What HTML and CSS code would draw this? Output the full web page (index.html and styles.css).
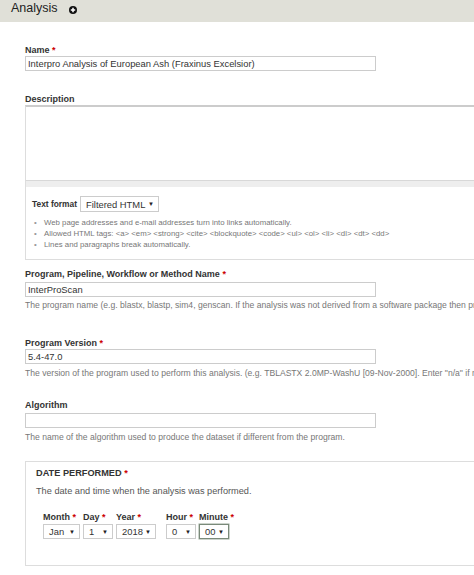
FILE: index.html
```html
<!DOCTYPE html>
<html>
<head>
<meta charset="utf-8">
<link rel="stylesheet" href="styles.css">
</head>
<body>
<div class="header">
  <span class="title">Analysis</span>
  <span class="add-icon"><svg width="8" height="8" viewBox="0 0 8 8"><circle cx="4" cy="4" r="4" fill="#111"/><path d="M4 1.8V6.2M1.8 4H6.2" stroke="#fff" stroke-width="1.5"/></svg></span>
</div>
<div class="form">
  <div class="item item-name">
    <label class="lbl">Name <span class="req">*</span></label>
    <div class="input">Interpro Analysis of European Ash (Fraxinus Excelsior)</div>
  </div>

  <div class="item item-desc">
    <label class="lbl">Description</label>
    <div class="textarea"></div>
    <div class="grip"></div>
    <div class="format">
      <div class="format-row">
        <span class="format-lbl">Text format</span>
        <span class="select fmt-select"><span>Filtered HTML</span><span class="arrow">▼</span></span>
      </div>
      <ul class="tips">
        <li>Web page addresses and e-mail addresses turn into links automatically.</li>
        <li>Allowed HTML tags: &lt;a&gt; &lt;em&gt; &lt;strong&gt; &lt;cite&gt; &lt;blockquote&gt; &lt;code&gt; &lt;ul&gt; &lt;ol&gt; &lt;li&gt; &lt;dl&gt; &lt;dt&gt; &lt;dd&gt;</li>
        <li>Lines and paragraphs break automatically.</li>
      </ul>
    </div>
  </div>

  <div class="item item-program">
    <label class="lbl">Program, Pipeline, Workflow or Method Name <span class="req">*</span></label>
    <div class="input in-gap">InterProScan</div>
    <div class="help">The program name (e.g. blastx, blastp, sim4, genscan. If the analysis was not derived from a software package then provide a very brief description of the pipeline, workflow or method.</div>
  </div>

  <div class="item item-version">
    <label class="lbl">Program Version <span class="req">*</span></label>
    <div class="input">5.4-47.0</div>
    <div class="help help-low">The version of the program used to perform this analysis. (e.g. TBLASTX 2.0MP-WashU [09-Nov-2000]. Enter "n/a" if no version is available or applicable.</div>
  </div>

  <div class="item item-algo">
    <label class="lbl">Algorithm</label>
    <div class="input in-gap"></div>
    <div class="help help-low">The name of the algorithm used to produce the dataset if different from the program.</div>
  </div>

  <div class="fieldset">
    <div class="legend">DATE PERFORMED <span class="req">*</span></div>
    <div class="fs-help">The date and time when the analysis was performed.</div>
    <div class="date-row">
      <div class="dpart">
        <div class="dlbl">Month <span class="req">*</span></div>
        <span class="select s-month"><span>Jan</span><span class="arrow">▼</span></span>
      </div>
      <div class="dpart">
        <div class="dlbl">Day <span class="req">*</span></div>
        <span class="select s-day"><span>1</span><span class="arrow">▼</span></span>
      </div>
      <div class="dpart">
        <div class="dlbl">Year <span class="req">*</span></div>
        <span class="select s-year"><span>2018</span><span class="arrow">▼</span></span>
      </div>
      <div class="dpart gap-left">
        <div class="dlbl">Hour <span class="req">*</span></div>
        <span class="select s-hour"><span>0</span><span class="arrow">▼</span></span>
      </div>
      <div class="dpart">
        <div class="dlbl">Minute <span class="req">*</span></div>
        <span class="select s-min focus"><span>00</span><span class="arrow">▼</span></span>
      </div>
    </div>
  </div>
</div>
</body>
</html>
```

FILE: styles.css
```css
html, body {
  margin: 0;
  padding: 0;
  background: #fff;
  overflow: hidden;
}
body {
  width: 474px;
  height: 575px;
  font-family: "Liberation Sans", Arial, sans-serif;
  color: #333;
}
.header {
  height: 22px;
  background: #e0e0d8;
  padding-left: 11px;
  display: flex;
  align-items: flex-start;
}
.title {
  font-size: 12.5px;
  line-height: 16px;
  color: #222;
}
.add-icon {
  margin-left: 11px;
  margin-top: 6px;
  width: 8px;
  height: 8px;
  display: block;
}
.add-icon svg { display: block; }

.form {
  padding-left: 25px;
  width: 449px;
  overflow: hidden;
}
.item { display: block; }
.lbl {
  display: block;
  font-size: 9px;
  line-height: 12px;
  font-weight: bold;
  color: #333;
}
.req { color: #c00; }
.input {
  box-sizing: border-box;
  width: 351px;
  height: 15px;
  border: 1px solid #ccc;
  font-size: 9.4px;
  line-height: 13px;
  padding-left: 2px;
  color: #333;
  white-space: nowrap;
  overflow: hidden;
}
.in-gap { margin-top: 2px; }
.help {
  font-size: 8.6px;
  line-height: 12px;
  color: #777;
  white-space: nowrap;
  margin-top: 2px;
}
.help-low { margin-top: 3px; }
.item-name { margin-top: 22px; }
.item-desc { margin-top: 22px; }
.textarea {
  box-sizing: border-box;
  width: 460px;
  height: 75px;
  border: 1px solid #ddd;
  border-top: 2px solid #ccc;
  border-bottom: 0;
}
.grip {
  box-sizing: border-box;
  width: 460px;
  height: 7px;
  background: #eee;
  border-top: 1px solid #d8d8d8;
  border-left: 1px solid #ddd;
}
.format {
  box-sizing: border-box;
  width: 460px;
  height: 73px;
  border: 1px solid #ddd;
  border-top: 0;
  padding: 9px 0 0 6px;
}
.format-row {
  display: flex;
  align-items: center;
  gap: 3px;
}
.format-lbl {
  font-size: 8.4px;
  font-weight: bold;
  color: #333;
}
.select {
  box-sizing: border-box;
  display: inline-flex;
  align-items: center;
  justify-content: space-between;
  height: 15px;
  border: 1px solid #ccc;
  background: #fff;
  font-size: 9.4px;
  color: #333;
  padding: 0 4px 0 5px;
}
.arrow {
  font-size: 6px;
  color: #222;
}
.fmt-select { width: 79px; height: 16px; }
.tips {
  margin: 5px 0 0 0;
  padding: 0 0 0 12px;
  list-style: none;
  font-size: 7.8px;
  line-height: 11px;
  color: #777;
  white-space: nowrap;
}
.tips li { position: relative; }
.tips li::before {
  content: "•";
  position: absolute;
  left: -10px;
  color: #999;
}
.item-program { margin-top: 8px; }
.item-version { margin-top: 26px; }
.item-algo { margin-top: 20px; }

.fieldset {
  box-sizing: border-box;
  margin-top: 18px;
  width: 460px;
  height: 105px;
  border: 1px solid #ddd;
  border-right: 0;
  padding: 5px 0 0 10px;
}
.legend {
  font-size: 9.2px;
  line-height: 12px;
  font-weight: bold;
  color: #333;
}
.fs-help {
  margin-top: 6px;
  font-size: 9.2px;
  line-height: 12px;
  color: #555;
  white-space: nowrap;
}
.date-row {
  display: flex;
  margin-top: 16px;
  padding-left: 7px;
  gap: 3px;
}
.dlbl {
  font-size: 9px;
  line-height: 8px;
  margin-bottom: 0;
  font-weight: bold;
  color: #333;
  white-space: nowrap;
}
.gap-left { margin-left: 7px; }
.s-month { width: 37px; }
.s-day { width: 30px; }
.s-year { width: 40px; }
.s-hour { width: 30px; }
.s-min { width: 30px; }
.focus { border-color: #7a8a7a; box-shadow: 0 0 0 0.5px #9a9; }
```
